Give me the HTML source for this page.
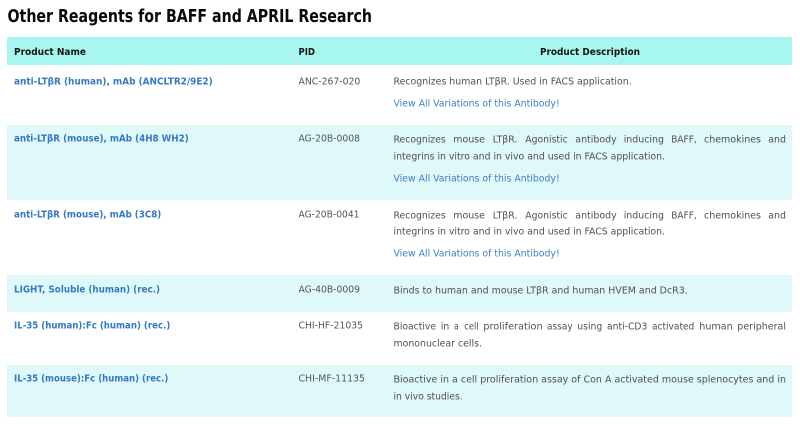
<!DOCTYPE html>
<html><head><meta charset="utf-8"><style>
html,body{margin:0;padding:0;background:#fff;width:800px;height:424px;overflow:hidden}
svg{display:block;filter:blur(.35px)}
text{font-family:"DejaVu Sans","Liberation Sans",sans-serif;white-space:pre;transform:translateY(-.6px)}
.t{font-size:17.8px;font-weight:700;fill:#0a0a0a}
.h{font-size:9.9px;font-weight:700;fill:#151515}
.n{font-size:9.9px;font-weight:700;fill:#3579c2}
.p{font-size:9.9px;fill:#555}
.d{font-size:9.9px;fill:#505050}
.l{font-size:9.9px;fill:#3f80c8}
</style></head><body>
<svg width="800" height="424" viewBox="0 0 800 424" xmlns="http://www.w3.org/2000/svg">
<rect width="800" height="424" fill="#fff"/>
<rect x="7" y="37" width="785" height="28" fill="#a7f6f0"/>
<rect x="7" y="125" width="785" height="75" fill="#dff8f9"/>
<rect x="7" y="275" width="785" height="37" fill="#dff8f9"/>
<rect x="7" y="365" width="785" height="52" fill="#dff8f9"/>
<text class="t" x="7.5" y="22.5" textLength="364.5" lengthAdjust="spacingAndGlyphs">Other Reagents for BAFF and APRIL Research</text>
<text class="h" x="14" y="55.5" textLength="72" lengthAdjust="spacingAndGlyphs">Product Name</text>
<text class="h" x="298.5" y="55.5" textLength="16.5" lengthAdjust="spacingAndGlyphs">PID</text>
<text class="h" x="540" y="55.5" textLength="100" lengthAdjust="spacingAndGlyphs">Product Description</text>

<text class="n" x="14" y="85" textLength="198.7" lengthAdjust="spacingAndGlyphs">anti-LTβR (human), mAb (ANCLTR2/9E2)</text>
<text class="n" x="14" y="142" textLength="174.7" lengthAdjust="spacingAndGlyphs">anti-LTβR (mouse), mAb (4H8 WH2)</text>
<text class="n" x="14" y="218" textLength="147.3" lengthAdjust="spacingAndGlyphs">anti-LTβR (mouse), mAb (3C8)</text>
<text class="n" x="14" y="293" textLength="146" lengthAdjust="spacingAndGlyphs">LIGHT, Soluble (human) (rec.)</text>
<text class="n" x="14" y="329" textLength="156.3" lengthAdjust="spacingAndGlyphs">IL-35 (human):Fc (human) (rec.)</text>
<text class="n" x="14" y="382" textLength="154.3" lengthAdjust="spacingAndGlyphs">IL-35 (mouse):Fc (human) (rec.)</text>

<text class="p" x="298.5" y="85" textLength="61.8" lengthAdjust="spacingAndGlyphs">ANC-267-020</text>
<text class="p" x="298.5" y="142" textLength="61.5" lengthAdjust="spacingAndGlyphs">AG-20B-0008</text>
<text class="p" x="298.5" y="218" textLength="61" lengthAdjust="spacingAndGlyphs">AG-20B-0041</text>
<text class="p" x="298.5" y="293" textLength="61.5" lengthAdjust="spacingAndGlyphs">AG-40B-0009</text>
<text class="p" x="298.5" y="329" textLength="64.5" lengthAdjust="spacingAndGlyphs">CHI-HF-21035</text>
<text class="p" x="298.5" y="382" textLength="66.5" lengthAdjust="spacingAndGlyphs">CHI-MF-11135</text>

<text class="d" x="393.5" y="85" textLength="238.2" lengthAdjust="spacingAndGlyphs">Recognizes human LTβR. Used in FACS application.</text>
<text class="l" x="393.5" y="107" textLength="166.2" lengthAdjust="spacingAndGlyphs">View All Variations of this Antibody!</text>

<text class="d" x="393.5" y="143" textLength="52.2" lengthAdjust="spacingAndGlyphs">Recognizes</text>
<text class="d" x="453.3" y="143" textLength="31.7" lengthAdjust="spacingAndGlyphs">mouse</text>
<text class="d" x="492.7" y="143" textLength="24.6" lengthAdjust="spacingAndGlyphs">LTβR.</text>
<text class="d" x="525.3" y="143" textLength="42.4" lengthAdjust="spacingAndGlyphs">Agonistic</text>
<text class="d" x="575.3" y="143" textLength="41.4" lengthAdjust="spacingAndGlyphs">antibody</text>
<text class="d" x="623.7" y="143" textLength="40.3" lengthAdjust="spacingAndGlyphs">inducing</text>
<text class="d" x="671.3" y="143" textLength="25.4" lengthAdjust="spacingAndGlyphs">BAFF,</text>
<text class="d" x="704" y="143" textLength="57" lengthAdjust="spacingAndGlyphs">chemokines</text>
<text class="d" x="768.3" y="143" textLength="17.7" lengthAdjust="spacingAndGlyphs">and</text>
<text class="d" x="393.5" y="160" textLength="271.5" lengthAdjust="spacingAndGlyphs">integrins in vitro and in vivo and used in FACS application.</text>
<text class="l" x="393.5" y="182" textLength="166.2" lengthAdjust="spacingAndGlyphs">View All Variations of this Antibody!</text>

<text class="d" x="393.5" y="219" textLength="52.2" lengthAdjust="spacingAndGlyphs">Recognizes</text>
<text class="d" x="453.3" y="219" textLength="31.7" lengthAdjust="spacingAndGlyphs">mouse</text>
<text class="d" x="492.7" y="219" textLength="24.6" lengthAdjust="spacingAndGlyphs">LTβR.</text>
<text class="d" x="525.3" y="219" textLength="42.4" lengthAdjust="spacingAndGlyphs">Agonistic</text>
<text class="d" x="575.3" y="219" textLength="41.4" lengthAdjust="spacingAndGlyphs">antibody</text>
<text class="d" x="623.7" y="219" textLength="40.3" lengthAdjust="spacingAndGlyphs">inducing</text>
<text class="d" x="671.3" y="219" textLength="25.4" lengthAdjust="spacingAndGlyphs">BAFF,</text>
<text class="d" x="704" y="219" textLength="57" lengthAdjust="spacingAndGlyphs">chemokines</text>
<text class="d" x="768.3" y="219" textLength="17.7" lengthAdjust="spacingAndGlyphs">and</text>
<text class="d" x="393.5" y="235" textLength="271.5" lengthAdjust="spacingAndGlyphs">integrins in vitro and in vivo and used in FACS application.</text>
<text class="l" x="393.5" y="257" textLength="166.2" lengthAdjust="spacingAndGlyphs">View All Variations of this Antibody!</text>

<text class="d" x="393.5" y="294" textLength="294.2" lengthAdjust="spacingAndGlyphs">Binds to human and mouse LTβR and human HVEM and DcR3.</text>

<text class="d" x="393.5" y="330" textLength="42.5" lengthAdjust="spacingAndGlyphs">Bioactive</text>
<text class="d" x="440.7" y="330" textLength="8.6" lengthAdjust="spacingAndGlyphs">in</text>
<text class="d" x="454" y="330" textLength="4.7" lengthAdjust="spacingAndGlyphs">a</text>
<text class="d" x="464.3" y="330" textLength="14.4" lengthAdjust="spacingAndGlyphs">cell</text>
<text class="d" x="483.3" y="330" textLength="59.4" lengthAdjust="spacingAndGlyphs">proliferation</text>
<text class="d" x="547" y="330" textLength="25.7" lengthAdjust="spacingAndGlyphs">assay</text>
<text class="d" x="577.3" y="330" textLength="25" lengthAdjust="spacingAndGlyphs">using</text>
<text class="d" x="607" y="330" textLength="40.3" lengthAdjust="spacingAndGlyphs">anti-CD3</text>
<text class="d" x="652" y="330" textLength="42.3" lengthAdjust="spacingAndGlyphs">activated</text>
<text class="d" x="699.3" y="330" textLength="33.4" lengthAdjust="spacingAndGlyphs">human</text>
<text class="d" x="737.3" y="330" textLength="48.7" lengthAdjust="spacingAndGlyphs">peripheral</text>
<text class="d" x="393.5" y="347" textLength="88.5" lengthAdjust="spacingAndGlyphs">mononuclear cells.</text>

<text class="d" x="393.5" y="383" textLength="392.5" lengthAdjust="spacingAndGlyphs">Bioactive in a cell proliferation assay of Con A activated mouse splenocytes and in</text>
<text class="d" x="393.5" y="400" textLength="69.2" lengthAdjust="spacingAndGlyphs">in vivo studies.</text>
</svg>
</body></html>
